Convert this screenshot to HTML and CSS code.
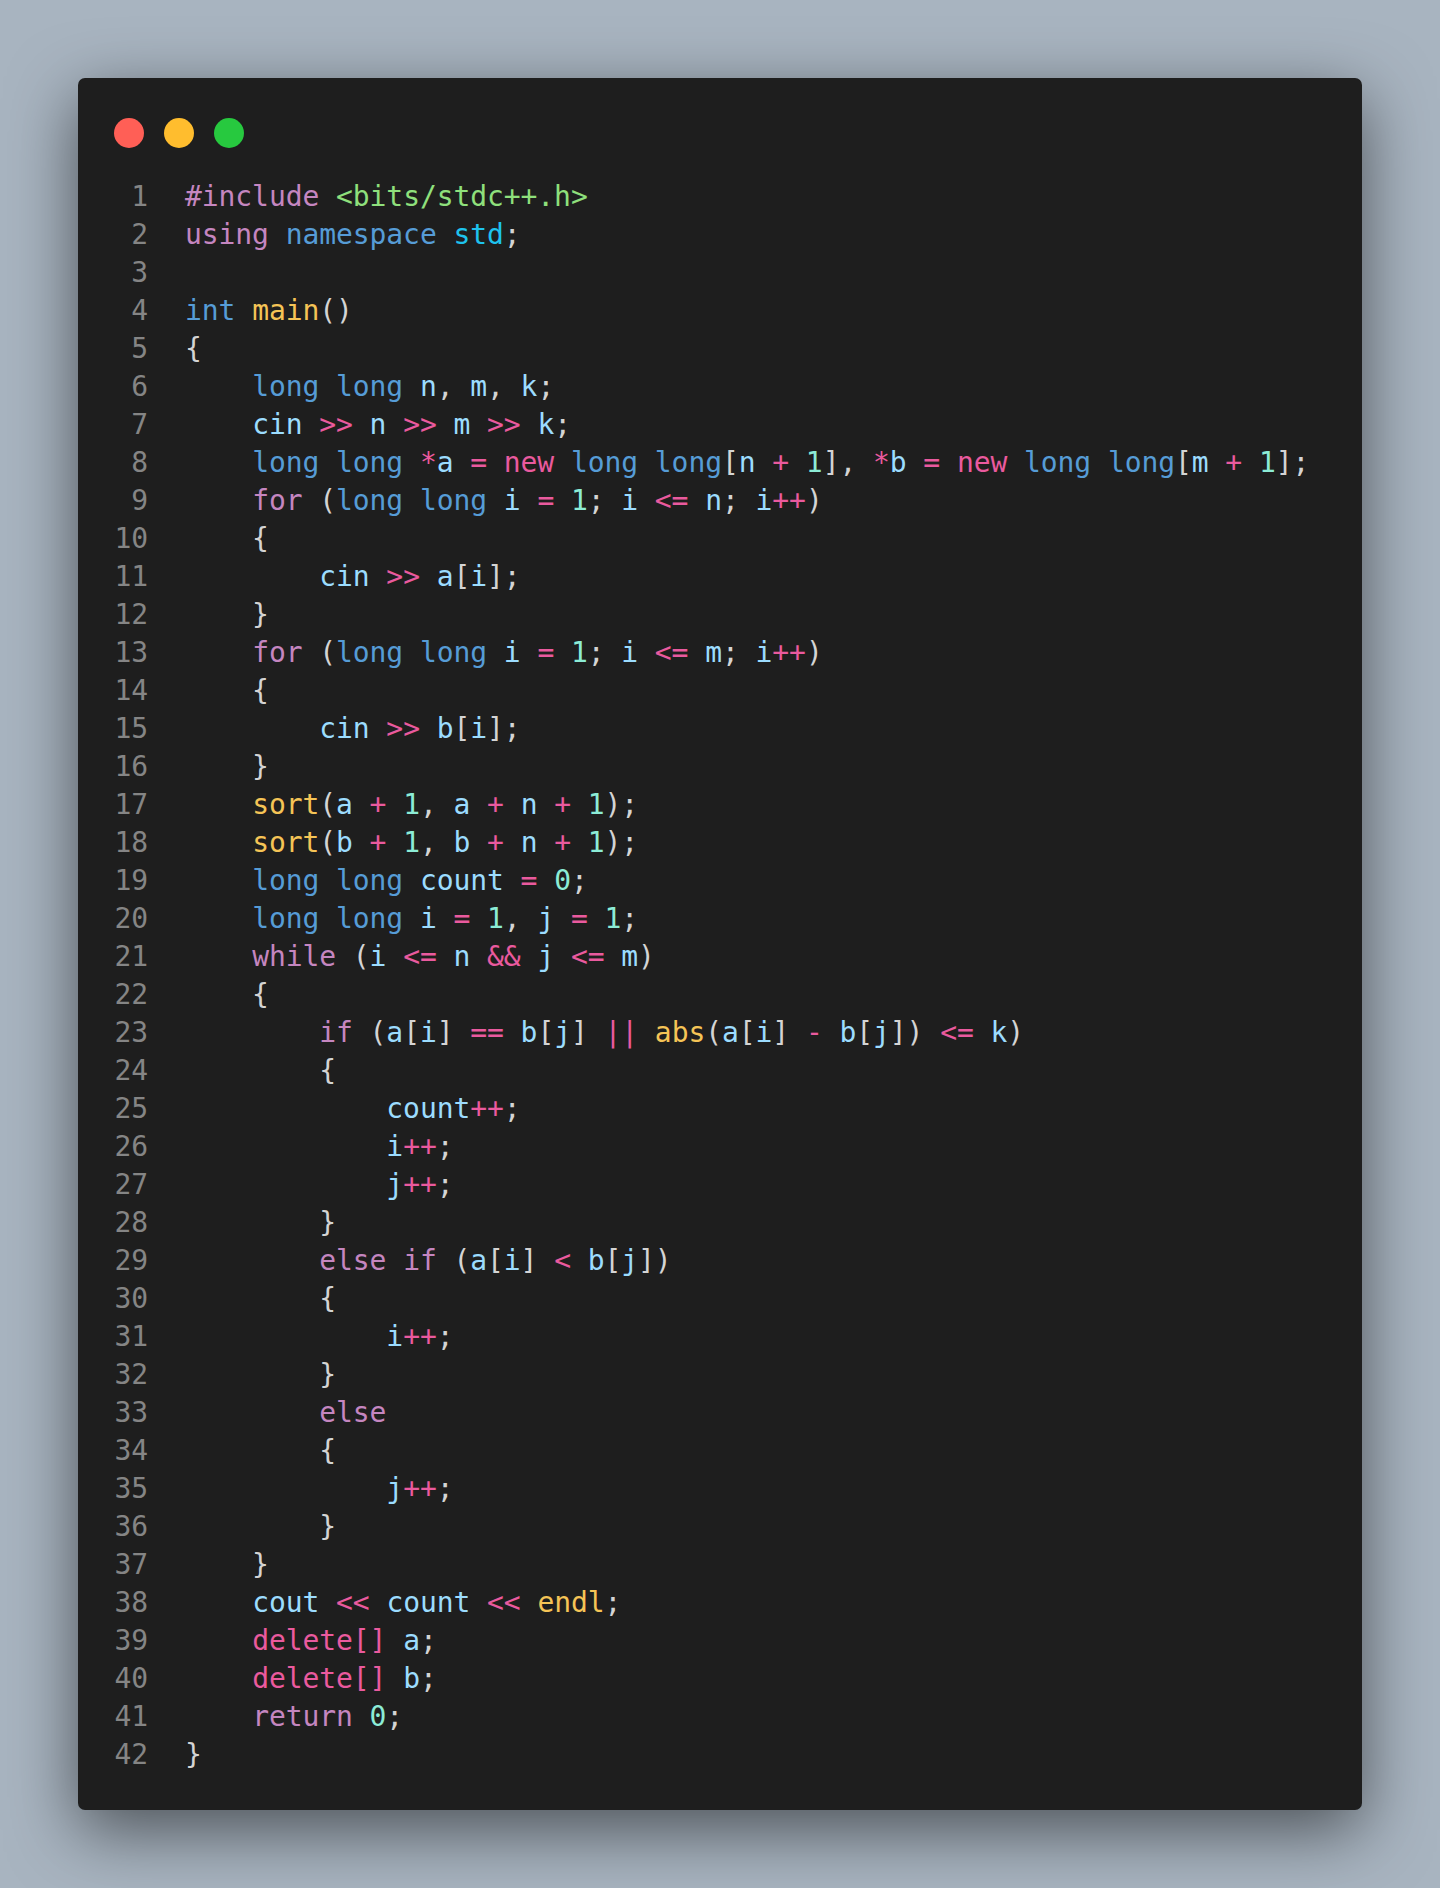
FILE: index.html
```html
<!DOCTYPE html>
<html>
<head>
<meta charset="utf-8">
<link rel="stylesheet" href="styles.css">
</head>
<body>
<div class="window">
  <div class="controls">
    <span class="dot red"></span><span class="dot yellow"></span><span class="dot green"></span>
  </div>
  <div class="code">
<div class="line"><span class="ln">1</span><span class="src"><span class="k">#include</span> <span class="s">&lt;bits/stdc++.h&gt;</span></span></div>
<div class="line"><span class="ln">2</span><span class="src"><span class="k">using</span> <span class="t">namespace</span> <span class="ns">std</span>;</span></div>
<div class="line"><span class="ln">3</span><span class="src"></span></div>
<div class="line"><span class="ln">4</span><span class="src"><span class="t">int</span> <span class="f">main</span>()</span></div>
<div class="line"><span class="ln">5</span><span class="src">{</span></div>
<div class="line"><span class="ln">6</span><span class="src">    <span class="t">long long</span> <span class="v">n</span>, <span class="v">m</span>, <span class="v">k</span>;</span></div>
<div class="line"><span class="ln">7</span><span class="src">    <span class="v">cin</span> <span class="o">&gt;&gt;</span> <span class="v">n</span> <span class="o">&gt;&gt;</span> <span class="v">m</span> <span class="o">&gt;&gt;</span> <span class="v">k</span>;</span></div>
<div class="line"><span class="ln">8</span><span class="src">    <span class="t">long long</span> <span class="o">*</span><span class="v">a</span> <span class="o">=</span> <span class="o">new</span> <span class="t">long long</span>[<span class="v">n</span> <span class="o">+</span> <span class="n">1</span>], <span class="o">*</span><span class="v">b</span> <span class="o">=</span> <span class="o">new</span> <span class="t">long long</span>[<span class="v">m</span> <span class="o">+</span> <span class="n">1</span>];</span></div>
<div class="line"><span class="ln">9</span><span class="src">    <span class="k">for</span> (<span class="t">long long</span> <span class="v">i</span> <span class="o">=</span> <span class="n">1</span>; <span class="v">i</span> <span class="o">&lt;=</span> <span class="v">n</span>; <span class="v">i</span><span class="o">++</span>)</span></div>
<div class="line"><span class="ln">10</span><span class="src">    {</span></div>
<div class="line"><span class="ln">11</span><span class="src">        <span class="v">cin</span> <span class="o">&gt;&gt;</span> <span class="v">a</span>[<span class="v">i</span>];</span></div>
<div class="line"><span class="ln">12</span><span class="src">    }</span></div>
<div class="line"><span class="ln">13</span><span class="src">    <span class="k">for</span> (<span class="t">long long</span> <span class="v">i</span> <span class="o">=</span> <span class="n">1</span>; <span class="v">i</span> <span class="o">&lt;=</span> <span class="v">m</span>; <span class="v">i</span><span class="o">++</span>)</span></div>
<div class="line"><span class="ln">14</span><span class="src">    {</span></div>
<div class="line"><span class="ln">15</span><span class="src">        <span class="v">cin</span> <span class="o">&gt;&gt;</span> <span class="v">b</span>[<span class="v">i</span>];</span></div>
<div class="line"><span class="ln">16</span><span class="src">    }</span></div>
<div class="line"><span class="ln">17</span><span class="src">    <span class="f">sort</span>(<span class="v">a</span> <span class="o">+</span> <span class="n">1</span>, <span class="v">a</span> <span class="o">+</span> <span class="v">n</span> <span class="o">+</span> <span class="n">1</span>);</span></div>
<div class="line"><span class="ln">18</span><span class="src">    <span class="f">sort</span>(<span class="v">b</span> <span class="o">+</span> <span class="n">1</span>, <span class="v">b</span> <span class="o">+</span> <span class="v">n</span> <span class="o">+</span> <span class="n">1</span>);</span></div>
<div class="line"><span class="ln">19</span><span class="src">    <span class="t">long long</span> <span class="v">count</span> <span class="o">=</span> <span class="n">0</span>;</span></div>
<div class="line"><span class="ln">20</span><span class="src">    <span class="t">long long</span> <span class="v">i</span> <span class="o">=</span> <span class="n">1</span>, <span class="v">j</span> <span class="o">=</span> <span class="n">1</span>;</span></div>
<div class="line"><span class="ln">21</span><span class="src">    <span class="k">while</span> (<span class="v">i</span> <span class="o">&lt;=</span> <span class="v">n</span> <span class="o">&amp;&amp;</span> <span class="v">j</span> <span class="o">&lt;=</span> <span class="v">m</span>)</span></div>
<div class="line"><span class="ln">22</span><span class="src">    {</span></div>
<div class="line"><span class="ln">23</span><span class="src">        <span class="k">if</span> (<span class="v">a</span>[<span class="v">i</span>] <span class="o">==</span> <span class="v">b</span>[<span class="v">j</span>] <span class="o">||</span> <span class="f">abs</span>(<span class="v">a</span>[<span class="v">i</span>] <span class="o">-</span> <span class="v">b</span>[<span class="v">j</span>]) <span class="o">&lt;=</span> <span class="v">k</span>)</span></div>
<div class="line"><span class="ln">24</span><span class="src">        {</span></div>
<div class="line"><span class="ln">25</span><span class="src">            <span class="v">count</span><span class="o">++</span>;</span></div>
<div class="line"><span class="ln">26</span><span class="src">            <span class="v">i</span><span class="o">++</span>;</span></div>
<div class="line"><span class="ln">27</span><span class="src">            <span class="v">j</span><span class="o">++</span>;</span></div>
<div class="line"><span class="ln">28</span><span class="src">        }</span></div>
<div class="line"><span class="ln">29</span><span class="src">        <span class="k">else</span> <span class="k">if</span> (<span class="v">a</span>[<span class="v">i</span>] <span class="o">&lt;</span> <span class="v">b</span>[<span class="v">j</span>])</span></div>
<div class="line"><span class="ln">30</span><span class="src">        {</span></div>
<div class="line"><span class="ln">31</span><span class="src">            <span class="v">i</span><span class="o">++</span>;</span></div>
<div class="line"><span class="ln">32</span><span class="src">        }</span></div>
<div class="line"><span class="ln">33</span><span class="src">        <span class="k">else</span></span></div>
<div class="line"><span class="ln">34</span><span class="src">        {</span></div>
<div class="line"><span class="ln">35</span><span class="src">            <span class="v">j</span><span class="o">++</span>;</span></div>
<div class="line"><span class="ln">36</span><span class="src">        }</span></div>
<div class="line"><span class="ln">37</span><span class="src">    }</span></div>
<div class="line"><span class="ln">38</span><span class="src">    <span class="v">cout</span> <span class="o">&lt;&lt;</span> <span class="v">count</span> <span class="o">&lt;&lt;</span> <span class="f">endl</span>;</span></div>
<div class="line"><span class="ln">39</span><span class="src">    <span class="o">delete[]</span> <span class="v">a</span>;</span></div>
<div class="line"><span class="ln">40</span><span class="src">    <span class="o">delete[]</span> <span class="v">b</span>;</span></div>
<div class="line"><span class="ln">41</span><span class="src">    <span class="k">return</span> <span class="n">0</span>;</span></div>
<div class="line"><span class="ln">42</span><span class="src">}</span></div>
  </div>
</div>
</body>
</html>
```
FILE: styles.css
```css
html, body {
  margin: 0;
  padding: 0;
}
body {
  background: #a8b4c0;
  padding: 78px 78px 78px 78px;
  min-height: 1888px;
  box-sizing: border-box;
}
.window {
  width: 1284px;
  height: 1732px;
  box-sizing: border-box;
  background: #1e1e1e;
  border-radius: 7px;
  box-shadow: 0 20px 68px rgba(0, 0, 0, 0.55);
  padding: 40px 36px 36px 36px;
}
.controls {
  display: flex;
  gap: 20px;
  height: 30px;
}
.dot {
  width: 30px;
  height: 30px;
  border-radius: 50%;
  display: block;
}
.red { background: #ff5f56; }
.yellow { background: #ffbd2e; }
.green { background: #27c93f; }
.code {
  margin-top: 30px;
  font-family: "DejaVu Sans Mono", monospace;
  font-size: 28px;
  line-height: 38px;
  letter-spacing: -0.08px;
  color: #d4d4d4;
}
.line {
  display: flex;
  gap: 37px;
  height: 38px;
  white-space: pre;
}
.ln {
  width: 34px;
  flex: none;
  text-align: right;
  color: #858585;
}
.k { color: #c586c0; }
.t { color: #569cd6; }
.ns { color: #1ec3ee; }
.s { color: #8fe07c; }
.v { color: #9cdcfe; }
.o { color: #ea5a9e; }
.n { color: #8cecd6; }
.f { color: #f5c456; }
```
